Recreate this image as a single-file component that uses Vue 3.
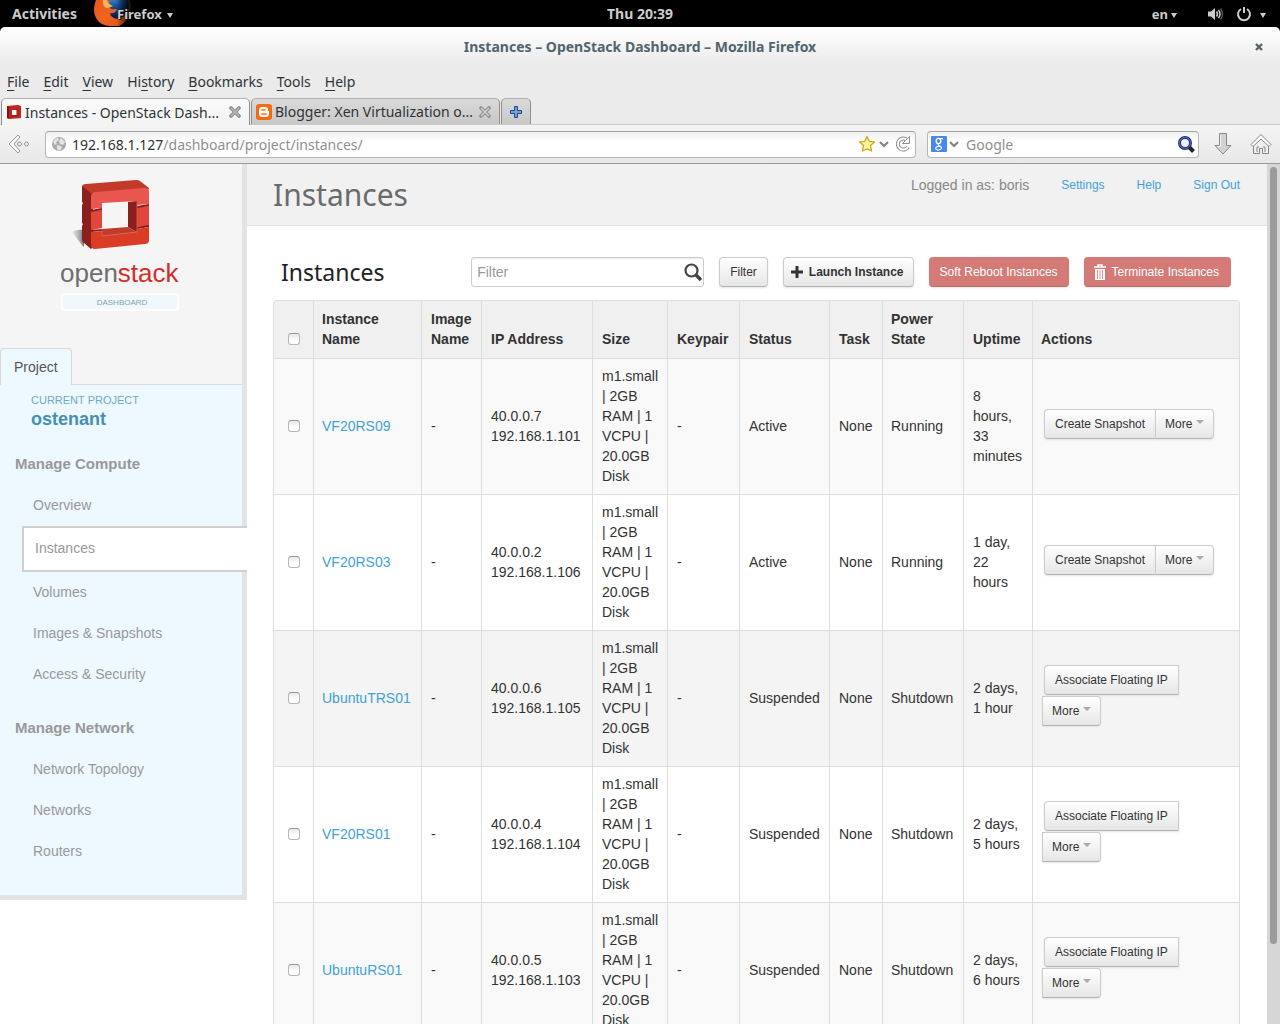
<script setup>
import { ref } from 'vue'

const menus = [
  { pre: '', key: 'F', post: 'ile' },
  { pre: '', key: 'E', post: 'dit' },
  { pre: '', key: 'V', post: 'iew' },
  { pre: 'Hi', key: 's', post: 'tory' },
  { pre: '', key: 'B', post: 'ookmarks' },
  { pre: '', key: 'T', post: 'ools' },
  { pre: '', key: 'H', post: 'elp' },
]

const navGroups = [
  { title: 'Manage Compute', items: ['Overview', 'Instances', 'Volumes', 'Images & Snapshots', 'Access & Security'] },
  { title: 'Manage Network', items: ['Network Topology', 'Networks', 'Routers'] },
]
const current = 'Instances'

const columns = [
  { label: 'Instance Name', cls: 'c-name' },
  { label: 'Image Name', cls: 'c-image' },
  { label: 'IP Address', cls: 'c-ip' },
  { label: 'Size', cls: 'c-size' },
  { label: 'Keypair', cls: 'c-key' },
  { label: 'Status', cls: 'c-status' },
  { label: 'Task', cls: 'c-task' },
  { label: 'Power State', cls: 'c-power' },
  { label: 'Uptime', cls: 'c-uptime' },
  { label: 'Actions', cls: 'c-actions' },
]

const size = 'm1.small | 2GB RAM | 1 VCPU | 20.0GB Disk'
const instances = [
  { name: 'VF20RS09', ips: ['40.0.0.7', '192.168.1.101'], status: 'Active', power: 'Running', uptime: '8\nhours,\n33 minutes', action: 'Create Snapshot' },
  { name: 'VF20RS03', ips: ['40.0.0.2', '192.168.1.106'], status: 'Active', power: 'Running', uptime: '1 day,\n22 hours', action: 'Create Snapshot' },
  { name: 'UbuntuTRS01', ips: ['40.0.0.6', '192.168.1.105'], status: 'Suspended', power: 'Shutdown', uptime: '2 days,\n1 hour', action: 'Associate Floating IP', hover: true },
  { name: 'VF20RS01', ips: ['40.0.0.4', '192.168.1.104'], status: 'Suspended', power: 'Shutdown', uptime: '2 days,\n5 hours', action: 'Associate Floating IP' },
  { name: 'UbuntuRS01', ips: ['40.0.0.5', '192.168.1.103'], status: 'Suspended', power: 'Shutdown', uptime: '2 days,\n6 hours', action: 'Associate Floating IP' },
]

const path = ref('/dashboard/project/instances/')
</script>

<template>
  <div class="desktop">
    <header class="panel">
      <div class="panel-left">
        <button class="panel-btn">Activities</button>
        <button class="panel-btn app-menu">
          <svg class="firefox" width="40" height="26" viewBox="0 0 40 26" aria-hidden="true">
            <defs>
              <radialGradient id="globe" cx="0.4" cy="0.2" r="0.8">
                <stop offset="0" stop-color="#3f9ad8" /><stop offset="0.5" stop-color="#174a8c" /><stop offset="1" stop-color="#06122c" />
              </radialGradient>
              <linearGradient id="fox" x1="0" y1="0" x2="1" y2="1">
                <stop offset="0" stop-color="#e8591c" /><stop offset="0.5" stop-color="#f0641e" /><stop offset="1" stop-color="#d9501a" />
              </linearGradient>
              <linearGradient id="fade" x1="0" y1="0" x2="1" y2="0">
                <stop offset="0.6" stop-color="#000" stop-opacity="0" /><stop offset="1" stop-color="#000" />
              </linearGradient>
            </defs>
            <circle cx="20" cy="7" r="18" fill="#b9600f" />
            <circle cx="22" cy="5" r="14" fill="url(#globe)" />
            <path d="M3 0Q-1 10 3 18Q8 26 17 26L26 26Q33 23 35 16Q30 21 24 19Q17 17 17 13Q21 14 23 11Q25 9 22 9Q18 10 16 7Q15 4 17 1L14 0Z" fill="url(#fox)" />
            <path d="M14 0Q15 4 20 6Q17 8 13 8Q9 5 10 0Z" fill="#f8b25a" />
            <rect x="0" y="0" width="40" height="26" fill="url(#fade)" />
          </svg>
          <span class="app-name">Firefox</span>
          <i class="tri"></i>
        </button>
      </div>
      <time class="clock">Thu 20:39</time>
      <div class="panel-right">
        <button class="panel-btn lang">en<i class="tri"></i></button>
        <button class="panel-btn" aria-label="Volume">
          <svg width="17" height="14" viewBox="0 0 17 14">
            <path d="M1 4.500h3L8 1v12L4 9.500H1z" fill="#ccc" />
            <path d="M9.500 4.500q2 2.500 0 5M11.500 3q3 4 0 8" stroke="#ccc" stroke-width="1.500" fill="none" />
            <path d="M13.500 1.500q4 5.500 0 11" stroke="#555" stroke-width="1.500" fill="none" />
          </svg>
        </button>
        <button class="panel-btn power" aria-label="System">
          <svg width="16" height="16" viewBox="0 0 16 16">
            <path d="M5 3A6 6 0 1 0 11 3M8 1v6" stroke="#ccc" stroke-width="2" fill="none" />
          </svg>
          <i class="tri"></i>
        </button>
      </div>
    </header>

    <div class="window">
      <div class="titlebar">
        <span class="title">Instances – OpenStack Dashboard – Mozilla Firefox</span>
        <button class="win-close" aria-label="Close window">
          <svg width="8" height="8" viewBox="0 0 8 8"><path d="M1 1l6 6M7 1l-6 6" stroke="#51656d" stroke-width="2.400" /></svg>
        </button>
      </div>

      <nav class="menubar" aria-label="Menu">
        <button v-for="m in menus" :key="m.key + m.post">{{ m.pre }}<u>{{ m.key }}</u>{{ m.post }}</button>
      </nav>

      <div class="tabs">
        <div class="tab active">
          <svg width="16" height="16" viewBox="0 0 16 16" aria-hidden="true">
            <path d="M1 2L12 1l3 1v12l-11 1-3-1z" fill="#c2251f" />
            <path d="M1 2l2 1v12l-2-1z" fill="#7d1714" />
            <path d="M6 6h5v5H6z" fill="#fff" />
            <path d="M11 5v7H5" stroke="#8d1a17" fill="none" />
          </svg>
          <button class="tab-title">Instances - OpenStack Dash...</button>
          <button class="tab-close" aria-label="Close tab">
            <svg width="12" height="12" viewBox="0 0 12 12"><path d="M2 2l8 8M10 2l-8 8" stroke="#8b8d88" stroke-width="3.600" stroke-linecap="round" /><path d="M2 2l8 8M10 2l-8 8" stroke="#bcbdba" stroke-width="1.400" /></svg>
          </button>
        </div>
        <div class="tab">
          <svg width="16" height="16" viewBox="0 0 16 16" aria-hidden="true">
            <rect width="16" height="16" rx="3" fill="#f96a0c" />
            <path d="M6 3h3a3 3 0 0 1 3 3c0 1 0 1 1 1v3a3 3 0 0 1-3 3H6a3 3 0 0 1-3-3V6a3 3 0 0 1 3-3z" fill="#fff" />
            <path d="M6 6h3M6 10h4" stroke="#f96a0c" stroke-width="1.500" stroke-linecap="round" />
          </svg>
          <button class="tab-title">Blogger: Xen Virtualization o...</button>
          <button class="tab-close" aria-label="Close tab">
            <svg width="12" height="12" viewBox="0 0 12 12"><path d="M2 2l8 8M10 2l-8 8" stroke="#8b8d88" stroke-width="3.600" stroke-linecap="round" /><path d="M2 2l8 8M10 2l-8 8" stroke="#d8d9d6" stroke-width="1.400" /></svg>
          </button>
        </div>
        <button class="tab new" aria-label="New tab">
          <svg width="12" height="12" viewBox="0 0 12 12"><path d="M4.500.5h3v4h4v3h-4v4h-3v-4h-4v-3h4z" fill="#6f9fd6" stroke="#1f4a8c" /></svg>
        </button>
      </div>

      <div class="toolbar">
        <button class="tool back" aria-label="Back">
          <svg width="24" height="22" viewBox="0 0 24 22" fill="none">
            <path d="M11 2L2 11l9 9 2-2-6-7 6-7z" fill="#f7f7f7" stroke="#979797" stroke-linejoin="round" />
            <circle cx="12.500" cy="11" r="2" stroke="#979797" /><circle cx="19.500" cy="11" r="2" stroke="#979797" />
          </svg>
        </button>
        <div class="field url">
          <svg width="16" height="16" viewBox="0 0 16 16" aria-hidden="true">
            <circle cx="8" cy="8" r="7" fill="#a9aba8" />
            <path d="M2 6q2-4 5-4l1 2-3 2 1 2-2 1zM10 2l4 4-2 3-3-1-1-3zM6 9l4 1 1 2-3 3-2-2z" fill="#e4e5e3" />
          </svg>
          <label for="url">192.168.1.127</label>
          <input id="url" v-model="path" class="path" type="text" />
          <svg width="18" height="18" viewBox="0 0 18 18" aria-hidden="true">
            <path d="M9 1.500l2.200 4.800 5.300.6-4 3.500 1.100 5.600-4.600-2.200L4.400 16l1.100-5.600-4-3.500 5.300-.6z" fill="#fbf3a4" stroke="#cfa91c" stroke-width="1.300" stroke-linejoin="round" />
          </svg>
          <svg class="chev" width="10" height="8" viewBox="0 0 10 8" aria-hidden="true"><path d="M1 2l4 4 4-4" stroke="#80827e" stroke-width="2" fill="none" /></svg>
          <button class="reload" aria-label="Reload">
            <svg width="18" height="18" viewBox="0 0 18 18" fill="none">
              <path d="M13 5A5.500 5.500 0 1 0 14 12" stroke="#8d8f8b" stroke-width="4" />
              <path d="M13 5A5.500 5.500 0 1 0 14 12" stroke="#fff" stroke-width="2" />
              <path d="M15.500 1.500v7h-7z" fill="#fff" stroke="#8d8f8b" stroke-linejoin="round" />
            </svg>
          </button>
        </div>
        <div class="field search">
          <svg width="16" height="16" viewBox="0 0 16 16" aria-hidden="true">
            <rect width="16" height="16" rx="1" fill="#4787ee" />
            <ellipse cx="7.500" cy="5" rx="2.300" ry="2.600" stroke="#fff" stroke-width="1.400" fill="none" />
            <path d="M9 2.600h3M8 7.500q-2 1 0 2 3 1.200 2.300 3Q9 14.300 6.500 14 4 13.300 5 11.500q1-1.200 3.500-1" stroke="#fff" stroke-width="1.200" fill="none" />
          </svg>
          <svg class="chev" width="10" height="8" viewBox="0 0 10 8" aria-hidden="true"><path d="M1 2l4 4 4-4" stroke="#80827e" stroke-width="2" fill="none" /></svg>
          <input type="text" placeholder="Google" aria-label="Search with Google" />
          <button class="reload" aria-label="Search">
            <svg width="18" height="18" viewBox="0 0 18 18">
              <path d="M11.500 11.500l5 5" stroke="#262218" stroke-width="4" />
              <circle cx="8" cy="8" r="5.500" fill="#eef3fb" stroke="#1f2c7c" stroke-width="3" />
              <circle cx="8" cy="8" r="5.500" fill="none" stroke="#5a6fc0" />
            </svg>
          </button>
        </div>
        <button class="tool down" aria-label="Downloads">
          <svg width="20" height="24" viewBox="0 0 20 24">
            <path d="M6.500 1.500h7v12h4.500L10 22 2 13.500h4.500z" fill="#cfd3d4" stroke="#85888a" stroke-linejoin="round" />
            <path d="M7.500 2.500v12H4.500" stroke="#f3f5f5" fill="none" />
          </svg>
        </button>
        <button class="tool home" aria-label="Home">
          <svg width="22" height="22" viewBox="0 0 22 22" fill="none" stroke="#858585" stroke-linejoin="round">
            <path d="M3.500 13v7.500h6v-5h3v5h6V13" fill="#f0f0f0" />
            <path d="M1 11.500L11 1.500l10 10-2 2-8-7.500-8 7.500z" fill="#fdfdfd" />
            <path d="M7 19v-5h2M15 19v-5h-2" />
          </svg>
        </button>
      </div>

      <div class="viewport">
        <aside class="sidebar">
          <a class="logo" href="#" aria-label="OpenStack Dashboard">
            <svg width="120" height="136" viewBox="0 0 120 136">
              <defs>
                <linearGradient id="shade" x1="0" y1="0" x2="1" y2="0"><stop offset="0" stop-color="#888" stop-opacity="0.100" /><stop offset="1" stop-color="#555" stop-opacity="0.800" /></linearGradient>
              </defs>
              <path d="M12 54q4-3 12-2v17l-2-2z" fill="url(#shade)" />
              <path d="M22 9q0-3 4-3l50-4q3 0 4 1l9 7-1 3-56 5-10-7z" fill="#c23a2a" />
              <path d="M22 8v16l1 1-1 2v18l1 1-1 2v14q0 2 2 3l7 6 2-2V17z" fill="#8a201c" />
              <path fill-rule="evenodd" d="M31 18q1-4 5-4l48-4q5 0 5 4v12l-12 1v-4l-35 2v5l-11 1z" fill="#e9564f" />
              <path d="M31 33l11-1v18l-11 2zM77 29l12-1v20l-12 1z" fill="#e2463a" />
              <path d="M31 32l11-2v2l-11 2zM77 28l12-2v2l-12 2zM31 52l11-1v2l-11 1zM77 49l12-2v2l-12 2z" fill="#8a201c" />
              <path d="M31 54l11-1v5l35-4v-3l12-2v13q0 4-4 4l-50 5q-4 0-4-4z" fill="#da3c26" />
              <path d="M68 24l9-1v31l-9-5z" fill="#8a201c" />
              <path d="M42 51l26-2 9 5-35 4z" fill="#bf3c2c" />
              <path d="M42 51v7l35-4V23" fill="none" stroke="#d66255" stroke-width="0.800" />
              <text x="0" y="104" class="word"><tspan fill="#6e6e6e">open</tspan><tspan fill="#d12e2b">stack</tspan></text>
              <rect x="2" y="116" width="116" height="16" rx="2" fill="#f0f8fb" stroke="#fbfdfd" stroke-width="2" />
              <text x="62" y="127" class="dash" text-anchor="middle">DASHBOARD</text>
            </svg>
          </a>
          <div class="side-tabs"><a href="#" class="side-tab">Project</a></div>
          <div class="side-body">
            <div class="tenant">
              <h4>CURRENT PROJECT</h4>
              <h3>ostenant</h3>
            </div>
            <section v-for="g in navGroups" :key="g.title" class="nav-group">
              <h4>{{ g.title }}</h4>
              <ul>
                <li v-for="item in g.items" :key="item"><a href="#" :class="{ active: item === current }">{{ item }}</a></li>
              </ul>
            </section>
          </div>
        </aside>

        <main class="main">
          <div class="topbar">
            <h1>Instances</h1>
            <div class="user">
              <span>Logged in as: boris</span>
              <a href="#">Settings</a>
              <a href="#">Help</a>
              <a href="#">Sign Out</a>
            </div>
          </div>

          <div class="content">
            <div class="actions">
              <h2>Instances</h2>
              <div class="filter">
                <input type="text" placeholder="Filter" aria-label="Filter instances" />
                <svg width="18" height="18" viewBox="0 0 18 18" aria-hidden="true">
                  <circle cx="7.500" cy="7.500" r="6" stroke="#444" stroke-width="2.200" fill="none" />
                  <path d="M12 12l5 5" stroke="#444" stroke-width="3.500" />
                </svg>
              </div>
              <button class="btn">Filter</button>
              <button class="btn launch">
                <svg width="12" height="12" viewBox="0 0 12 12" aria-hidden="true"><path d="M4.500 0h3v4.500H12v3H7.500V12h-3V7.500H0v-3h4.500z" fill="#333" /></svg>
                Launch Instance
              </button>
              <button class="btn danger">Soft Reboot Instances</button>
              <button class="btn danger trash">
                <svg width="12" height="16" viewBox="0 0 12 16" aria-hidden="true">
                  <path d="M4 2.500V1h4v1.500M0 3h12" stroke="#fff" stroke-width="1.500" fill="none" />
                  <path d="M1 5h10v11H1z" fill="#fff" />
                  <path d="M3.500 6v9M6 6v9M8.500 6v9" stroke="#dd948f" />
                </svg>
                Terminate Instances
              </button>
            </div>

            <table>
              <thead>
                <tr>
                  <th class="c-check"><input type="checkbox" aria-label="Select all" /></th>
                  <th v-for="c in columns" :key="c.label" :class="c.cls">{{ c.label }}</th>
                </tr>
              </thead>
              <tbody>
                <tr v-for="i in instances" :key="i.name" :class="{ hover: i.hover }">
                  <td class="c-check"><input type="checkbox" :aria-label="'Select ' + i.name" /></td>
                  <td class="c-name"><a href="#">{{ i.name }}</a></td>
                  <td>-</td>
                  <td><div v-for="ip in i.ips" :key="ip">{{ ip }}</div></td>
                  <td>{{ size }}</td>
                  <td>-</td>
                  <td>{{ i.status }}</td>
                  <td>None</td>
                  <td class="c-power">{{ i.power }}</td>
                  <td class="c-uptime">{{ i.uptime }}</td>
                  <td class="c-actions">
                    <div class="group" :class="{ stacked: i.action !== 'Create Snapshot' }">
                      <button class="btn first">{{ i.action }}</button>
                      <button class="btn more">More<i class="caret"></i></button>
                    </div>
                  </td>
                </tr>
              </tbody>
            </table>
          </div>
        </main>

        <div class="scrollbar"><div class="thumb"></div></div>
      </div>
    </div>
  </div>
</template>

<style>
body {
  background: #000;
}
</style>

<style scoped>
* {
  box-sizing: border-box;
}
button,
input {
  font: inherit;
  color: inherit;
}
button {
  border: 0;
  padding: 0;
  background: none;
  white-space: nowrap;
}
svg {
  display: block;
  flex: none;
}
h1, h2, h3, h4, ul {
  margin: 0;
  padding: 0;
  font-weight: normal;
}
ul {
  list-style: none;
}
a {
  color: #43a1d6;
  text-decoration: none;
}
.desktop {
  height: 100vh;
  display: flex;
  flex-direction: column;
  overflow: hidden;
  font-family: "Noto Sans", sans-serif;
  font-size: 14px;
}

/* GNOME panel */
.panel {
  height: 27px;
  flex: none;
  display: grid;
  grid-template-columns: 1fr auto 1fr;
  align-items: center;
  background: #000;
  color: #ccc;
  font-weight: bold;
}
.panel-left,
.panel-right,
.panel-btn {
  display: flex;
  align-items: center;
}
.panel-left {
  padding-left: 12px;
  gap: 16px;
}
.panel-right {
  justify-content: flex-end;
  padding-right: 14px;
}
.app-menu {
  position: relative;
  height: 27px;
  padding-left: 24px;
  gap: 5px;
  font-size: 13px;
}
.firefox {
  position: absolute;
  left: 0;
  top: 0;
}
.app-name {
  position: relative;
  text-shadow: 1px 1px 1px #000;
}
.tri {
  border: 3px solid transparent;
  border-top: 5px solid #ccc;
  border-bottom: 0;
  margin-top: 3px;
}
.lang {
  gap: 3px;
  margin-right: 30px;
  font-size: 13px;
}
.power {
  margin-left: 12px;
  gap: 8px;
}

/* Browser chrome */
.window {
  flex: 1;
  min-height: 0;
  display: flex;
  flex-direction: column;
  border-radius: 5px 5px 0 0;
  overflow: hidden;
  background: linear-gradient(#fff, #ebebeb 38px);
  color: #2e3436;
}
.titlebar {
  height: 39px;
  flex: none;
  display: flex;
  align-items: center;
  padding: 0 17px 0 25px;
}
.title {
  flex: 1;
  text-align: center;
  font-weight: bold;
  color: #51656d;
}
.menubar {
  height: 32px;
  flex: none;
  display: flex;
  align-items: center;
  padding: 0 0 1px 7px;
  gap: 14px;
}
.menubar u {
  text-underline-offset: 3px;
}
.tabs {
  height: 27px;
  flex: none;
  display: flex;
  align-items: stretch;
  gap: 1px;
  padding-left: 1px;
  border-bottom: 1px solid #cbcbcb;
}
.tab {
  width: 249px;
  display: flex;
  align-items: center;
  gap: 3px;
  padding: 0 8px 0 4px;
  border: 1px solid #8f8f8f;
  border-top-color: #b0b0b0;
  border-bottom: 0;
  border-radius: 5px 5px 0 0;
  background: linear-gradient(#dadada, #c8c8c8);
}
.tab.active {
  margin-bottom: -1px;
  background: linear-gradient(#fafafa, #f3f3f3);
}
.tab.new {
  width: 30px;
  padding: 0;
  justify-content: center;
}
.tab-title {
  flex: 1;
  text-align: left;
}
.toolbar {
  height: 39px;
  flex: none;
  display: flex;
  align-items: center;
  padding: 0 8px 0 7px;
  background: linear-gradient(#f4f4f4, #e8e8e8);
  border-bottom: 1px solid #9a9a9a;
}
.back {
  margin-right: 14px;
}
.field {
  height: 27px;
  display: flex;
  align-items: center;
  padding: 0 3px;
  border: 1px solid #b5b5b5;
  border-top-color: #a5a5a5;
  border-radius: 4px;
  background: linear-gradient(#efefef, #fff 10px);
}
.field input {
  flex: 1;
  min-width: 0;
  border: 0;
  padding: 0;
  outline: 0;
  background: none;
  color: #8e908e;
}
.field input::placeholder {
  color: #8e908e;
}
.url {
  flex: 1;
  padding-left: 5px;
}
.url label {
  margin-left: 5px;
}
.url .chev {
  margin: 0 5px 0 3px;
}
.search {
  width: 272px;
  margin-left: 11px;
}
.search .chev {
  margin: 0 7px 0 2px;
}
.down {
  margin-left: 14px;
}
.home {
  margin-left: 17px;
}

/* Dashboard */
.viewport {
  flex: 1;
  min-height: 0;
  display: flex;
  align-items: flex-start;
  overflow: hidden;
  background: #fff;
  color: #333;
  font-family: "Liberation Sans", Arial, sans-serif;
  font-size: 14px;
  line-height: 20px;
}
.sidebar {
  width: 247px;
  flex: none;
  border: solid #e3e3e3;
  border-width: 0 5px 5px 0;
  background: #f5f5f5;
}
.logo {
  display: block;
  padding: 14px 0 34px 60px;
}
.word {
  font: 26px "Liberation Sans", sans-serif;
}
.dash {
  font: 8px "Liberation Sans", sans-serif;
  fill: #7fa3b2;
}
.side-tabs {
  display: flex;
  border-bottom: 1px solid #d9d9d9;
}
.side-tab {
  padding: 8px 13px;
  margin-bottom: -1px;
  border: 1px solid #d9d9d9;
  border-bottom: 0;
  border-radius: 4px 4px 0 0;
  background: #edf8ff;
  color: #555;
}
.side-body {
  padding: 8px 0 23px;
  background: #edf8ff;
}
.tenant {
  padding-left: 31px;
  height: 50px;
}
.tenant h4 {
  font-size: 11px;
  line-height: 14px;
  color: #6dabc7;
}
.tenant h3 {
  font-size: 18px;
  line-height: 24px;
  font-weight: bold;
  color: #4590b2;
}
.nav-group h4 {
  padding: 11px 15px;
  font-size: 15px;
  font-weight: bold;
  color: #999;
}
.nav-group + .nav-group {
  margin-top: 12px;
}
.nav-group a {
  display: block;
  padding: 10px 33px 11px;
  color: #999;
}
.nav-group a.active {
  margin: 0 -5px 0 22px;
  padding: 10px 11px 12px;
  background: #fff;
  border: 2px solid #d0d0d0;
  border-right: 0;
}
.main {
  flex: 1;
  min-width: 0;
}
.topbar {
  height: 62px;
  display: flex;
  justify-content: space-between;
  padding: 11px 27px 0 26px;
  background: #f1f1f1;
  border-bottom: 1px solid #e3e3e3;
}
h1,
h2 {
  font-family: "Noto Sans", sans-serif;
}
h1 {
  font-size: 30px;
  line-height: 40px;
  color: #6b6b6b;
}
.user {
  display: flex;
  gap: 32px;
  color: #888;
}
.user a {
  font-size: 12px;
}
.content {
  padding: 31px 27px 0 26px;
}
.actions {
  display: flex;
  align-items: center;
  gap: 15px;
  padding: 0 9px 13px 8px;
}
h2 {
  flex: 1;
  font-size: 23px;
  line-height: 30px;
  color: #222;
}
.filter {
  width: 233px;
  height: 30px;
  display: flex;
  align-items: center;
  padding: 0 1px 0 5px;
  border: 1px solid #ccc;
  border-radius: 3px;
  box-shadow: inset 0 1px 1px #ececec;
}
.filter input {
  flex: 1;
  min-width: 0;
  border: 0;
  padding: 0;
  outline: 0;
  background: none;
}
.filter input::placeholder {
  color: #999;
}
.btn {
  height: 30px;
  display: flex;
  align-items: center;
  padding: 0 10px;
  border: 1px solid #ccc;
  border-bottom-color: #b3b3b3;
  border-radius: 4px;
  background: linear-gradient(#fff, #e6e6e6);
  box-shadow: 0 1px 2px #e4e4e4;
  font-size: 12px;
  color: #333;
}
.launch {
  gap: 6px;
  padding: 0 9px 0 7px;
  font-weight: bold;
}
.danger {
  border-color: #d47b77;
  border-bottom-color: #b96b68;
  background: #d47b77;
  color: #fff;
}
.trash {
  gap: 6px;
  padding: 0 11px 0 9px;
}
table {
  width: 100%;
  table-layout: fixed;
  border-collapse: separate;
  border-spacing: 0;
  border: 1px solid #ddd;
  border-left: 0;
  border-radius: 4px 4px 0 0;
}
th,
td {
  text-align: left;
  border-left: 1px solid #ddd;
}
th {
  padding: 8px 8px 9px 9px;
  vertical-align: bottom;
  background: #f0f0f0;
}
th:first-child {
  border-top-left-radius: 4px;
}
th:last-child {
  border-top-right-radius: 4px;
}
td {
  padding: 7px 8px 8px 9px;
  border-top: 1px solid #ddd;
}
tbody tr:nth-child(odd) {
  background: #f9f9f9;
}
tbody tr.hover {
  background: #f4f4f4;
}
.c-check { width: 40px; padding-left: 14px; }
.c-name { width: 108px; padding-left: 8px; }
.c-image { width: 60px; }
.c-ip { width: 111px; }
.c-size { width: 75px; }
.c-key { width: 72px; }
.c-status { width: 90px; }
.c-task { width: 53px; }
.c-power { width: 81px; padding-left: 8px; }
.c-uptime { width: 69px; white-space: pre-line; }
.c-actions { padding-left: 8px; }
input[type="checkbox"] {
  appearance: none;
  display: block;
  width: 12px;
  height: 12px;
  margin: 4px 0;
  border: 1px solid #b9b9b4;
  border-top-color: #989892;
  border-radius: 3px;
  background: linear-gradient(#e8e8e8, #fff 6px);
}
.group {
  display: flex;
  margin: 0 0 5px 3px;
}
.group .first {
  border-radius: 4px 0 0 4px;
}
.group .more {
  margin-left: -1px;
  padding: 0 9px;
  border-radius: 0 4px 4px 0;
}
.group.stacked {
  flex-direction: column;
  align-items: flex-start;
  gap: 1px;
}
.group.stacked .more {
  margin-left: -2px;
}
.caret {
  margin: 0 0 4px 4px;
  border: 4px solid transparent;
  border-top-color: #aaa;
  border-bottom: 0;
}
.scrollbar {
  align-self: stretch;
  width: 13px;
  flex: none;
  padding: 3px;
  background: #d6d6d6;
}
.thumb {
  height: 91%;
  border-radius: 4px;
  background: #9b9b9c;
}
</style>
